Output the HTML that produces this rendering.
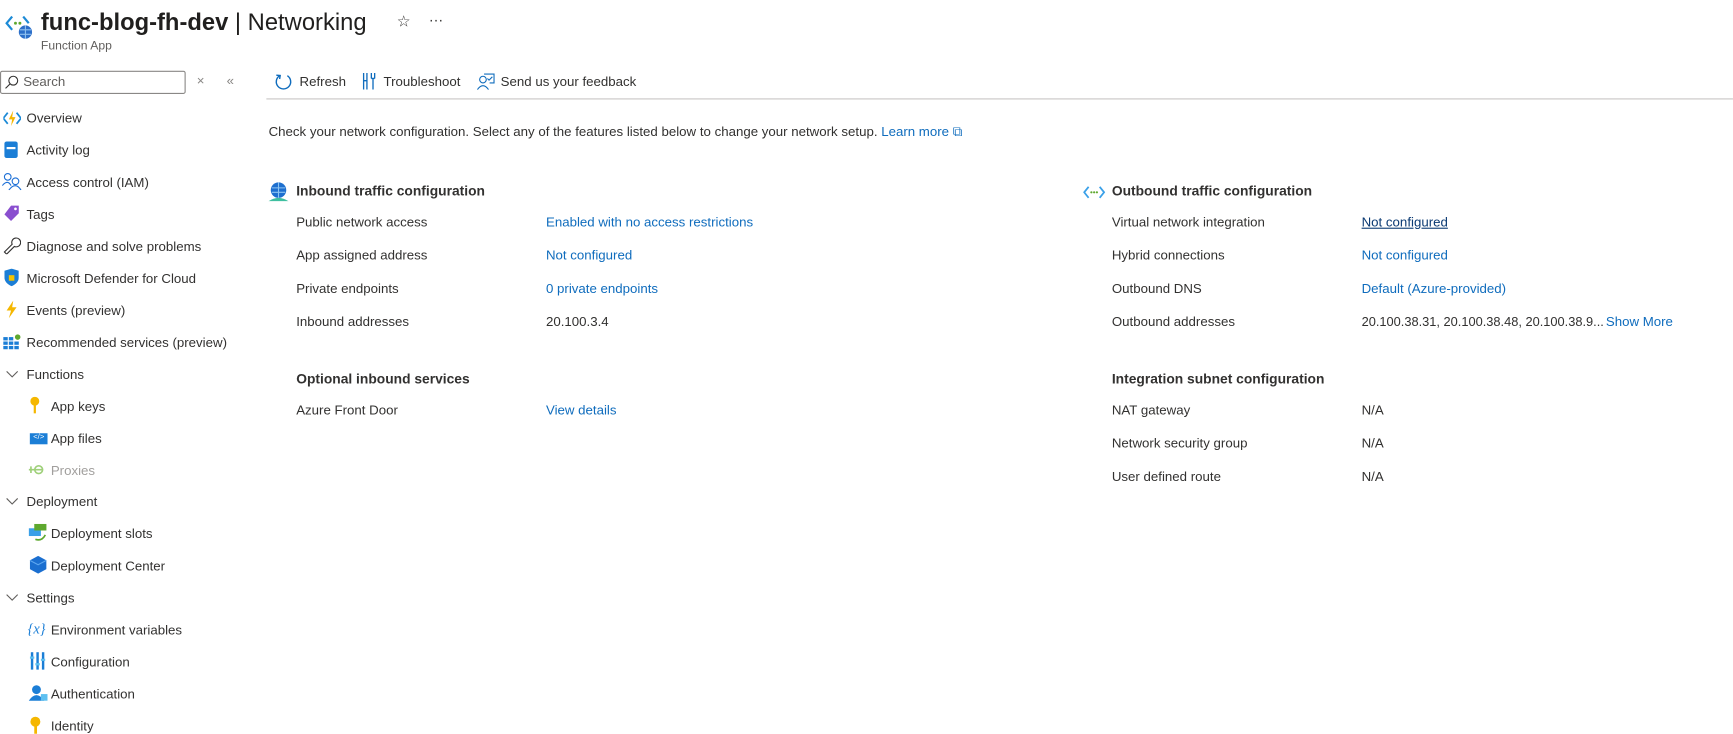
<!DOCTYPE html>
<html><head><meta charset="utf-8"><style>
*{margin:0;padding:0;box-sizing:border-box}
body{width:1733px;height:733px;background:#fff;font-family:"Liberation Sans",sans-serif;color:#323130;font-size:12px;position:relative;overflow:hidden}
#w{position:absolute;left:0;top:0;width:1568px;height:663px;transform:scale(1.1052);transform-origin:0 0}
.a{position:absolute;white-space:nowrap}
.l{color:#0f6cbd}
.b{font-weight:bold;font-size:12.5px}
.ic{position:absolute}
</style></head><body><div id="w">
<svg class="ic" style="left:4px;top:10px" width="26" height="26" viewBox="0 0 26 26"><path d="M7 5 L2 11 L7 17" stroke="#1c8ad6" stroke-width="2" fill="none"/><path d="M17 5 L22 11" stroke="#1c8ad6" stroke-width="2" fill="none"/><circle cx="10" cy="11" r="1.3" fill="#5ea82e"/><circle cx="14" cy="11" r="1.3" fill="#5ea82e"/><circle cx="19" cy="19" r="6" fill="#2c6fc9"/><path d="M14 17h10M14 21h10M19 13v12" stroke="#8fc1f0" stroke-width="1"/></svg>
<div class="a" style="left:37px;top:8px;font-size:21.5px;color:#201f1e"><b>func-blog-fh-dev</b> | Networking</div>
<div class="a" style="left:37px;top:36px;font-size:11px;color:#605e5c">Function App</div>
<div class="a" style="left:359px;top:11px;font-size:14px">☆</div>
<div class="a" style="left:388px;top:10px;font-size:13px">···</div>

<div class="a" style="left:0;top:64px;width:168px;height:21px;border:1px solid #8a8886;border-radius:2px"></div>
<svg class="ic" style="left:4px;top:68px" width="13" height="13"><circle cx="8" cy="5" r="4" stroke="#323130" fill="none"/><path d="M5 8 L1 12" stroke="#323130"/></svg>
<div class="a" style="left:21px;top:67px;color:#605e5c">Search</div>
<div class="a" style="left:178px;top:66px;color:#8a8886">×</div>
<div class="a" style="left:205px;top:66px;color:#8a8886">«</div>

<svg class="ic" style="left:248px;top:65px" width="17" height="17"><path d="M12 3.5 A6.5 6.5 0 1 1 5 3.5" stroke="#0f6cbd" stroke-width="1.3" fill="none"/><path d="M2 3 L5.5 3.3 L5 6.5" stroke="#0f6cbd" stroke-width="1.3" fill="none"/></svg>
<div class="a" style="left:271px;top:67px">Refresh</div>
<svg class="ic" style="left:326px;top:65px" width="14" height="17"><path d="M3 1v15M6 1v15M3 8h3M10 1v5M13 1v5M10 6h3M11.5 6v10" stroke="#0f6cbd" stroke-width="1.2" fill="none"/></svg>
<div class="a" style="left:347px;top:67px">Troubleshoot</div>
<svg class="ic" style="left:431px;top:65px" width="17" height="17"><circle cx="6" cy="7" r="3" stroke="#0f6cbd" fill="none"/><path d="M1 16 Q6 9 11 16M7 2h9v8h-4" stroke="#0f6cbd" fill="none"/><path d="M10 6l1.5 1.5 3-3" stroke="#0f6cbd" fill="none"/></svg>
<div class="a" style="left:453px;top:67px">Send us your feedback</div>
<div class="a" style="left:241px;top:89px;width:1327px;height:1px;background:#c8c6c4"></div>

<div class="a" style="left:243px;top:112px">Check your network configuration. Select any of the features listed below to change your network setup. <span class="l">Learn more ⧉</span></div>

<svg class="ic" style="left:242px;top:164px" width="20" height="20"><circle cx="10" cy="8" r="7" fill="#1e6fcf"/><path d="M4 6h12M4 10h12M10 1v14" stroke="#8cc4f3"/><path d="M1 18 Q10 12 19 18z" fill="#3fbfa0"/></svg>
<div class="a b" style="left:268px;top:166px">Inbound traffic configuration</div>
<div class="a" style="left:268px;top:194px">Public network access</div><div class="a l" style="left:494px;top:194px">Enabled with no access restrictions</div>
<div class="a" style="left:268px;top:224px">App assigned address</div><div class="a l" style="left:494px;top:224px">Not configured</div>
<div class="a" style="left:268px;top:254px">Private endpoints</div><div class="a l" style="left:494px;top:254px">0 private endpoints</div>
<div class="a" style="left:268px;top:284px">Inbound addresses</div><div class="a" style="left:494px;top:284px">20.100.3.4</div>
<div class="a b" style="left:268px;top:336px">Optional inbound services</div>
<div class="a" style="left:268px;top:364px">Azure Front Door</div><div class="a l" style="left:494px;top:364px">View details</div>

<svg class="ic" style="left:980px;top:167px" width="20" height="14"><path d="M5 2 L1 7 L5 12M15 2 L19 7 L15 12" stroke="#3aa0e8" stroke-width="1.6" fill="none"/><circle cx="7.5" cy="7" r="1" fill="#5ea82e"/><circle cx="10" cy="7" r="1" fill="#5ea82e"/><circle cx="12.5" cy="7" r="1" fill="#5ea82e"/></svg>
<div class="a b" style="left:1006px;top:166px">Outbound traffic configuration</div>
<div class="a" style="left:1006px;top:194px">Virtual network integration</div><div class="a" style="left:1232px;top:194px;color:#0b3a73;text-decoration:underline">Not configured</div>
<div class="a" style="left:1006px;top:224px">Hybrid connections</div><div class="a l" style="left:1232px;top:224px">Not configured</div>
<div class="a" style="left:1006px;top:254px">Outbound DNS</div><div class="a l" style="left:1232px;top:254px">Default (Azure-provided)</div>
<div class="a" style="left:1006px;top:284px">Outbound addresses</div><div class="a" style="left:1232px;top:284.5px;font-size:11.6px">20.100.38.31, 20.100.38.48, 20.100.38.9...</div><div class="a l" style="left:1453px;top:284px">Show More</div>
<div class="a b" style="left:1006px;top:336px">Integration subnet configuration</div>
<div class="a" style="left:1006px;top:364px">NAT gateway</div><div class="a" style="left:1232px;top:364px">N/A</div>
<div class="a" style="left:1006px;top:394px">Network security group</div><div class="a" style="left:1232px;top:394px">N/A</div>
<div class="a" style="left:1006px;top:424px">User defined route</div><div class="a" style="left:1232px;top:424px">N/A</div>

<svg class="ic" style="left:3px;top:99px" width="16" height="16"><path d="M4 3L0 8l4 5M12 3l4 5-4 5" stroke="#1c8ad6" stroke-width="1.6" fill="none"/><path d="M9 1L5 9h3l-1 6 4-8H8z" fill="#f5b700"/></svg>
<div class="a" style="left:24px;top:100px">Overview</div>
<div class="a" style="left:4px;top:128px;width:12px;height:15px;background:#1b7ed6;border-radius:2px"></div><div class="a" style="left:6px;top:133px;width:8px;height:2px;background:#fff"></div>
<div class="a" style="left:24px;top:129px">Activity log</div>
<svg class="ic" style="left:2px;top:156px" width="18" height="16"><circle cx="5" cy="4" r="3" stroke="#1c6fd6" fill="none"/><circle cx="12" cy="8" r="3" stroke="#1c6fd6" fill="none"/><path d="M0 12q5-6 8 0M6 16q6-8 11 0" stroke="#1c6fd6" fill="none"/></svg>
<div class="a" style="left:24px;top:158px">Access control (IAM)</div>
<svg class="ic" style="left:3px;top:185px" width="15" height="16"><path d="M7 1h7v7l-7 7-6-6z" fill="#8a4fcf"/><circle cx="11" cy="4" r="1.2" fill="#fff"/></svg>
<div class="a" style="left:24px;top:187px">Tags</div>
<svg class="ic" style="left:2px;top:214px" width="17" height="16"><path d="M2 14l7-7a4 4 0 1 1 2 2l-7 7z" stroke="#323130" fill="none"/></svg>
<div class="a" style="left:24px;top:216px">Diagnose and solve problems</div>
<svg class="ic" style="left:4px;top:243px" width="13" height="16"><path d="M6.5 0L13 2v6q0 5-6.5 8Q0 13 0 8V2z" fill="#1b7ed6"/><rect x="4" y="6" width="5" height="5" fill="#f5c400"/></svg>
<div class="a" style="left:24px;top:245px">Microsoft Defender for Cloud</div>
<svg class="ic" style="left:4px;top:272px" width="12" height="16"><path d="M8 0L2 9h4l-2 7 7-10H7z" fill="#f5b700"/></svg>
<div class="a" style="left:24px;top:274px">Events (preview)</div>
<svg class="ic" style="left:2px;top:301px" width="17" height="16"><g fill="#1b7ed6"><rect x="1" y="4" width="4" height="3"/><rect x="6" y="4" width="4" height="3"/><rect x="1" y="8" width="4" height="3"/><rect x="6" y="8" width="4" height="3"/><rect x="11" y="8" width="4" height="3"/><rect x="1" y="12" width="4" height="3"/><rect x="6" y="12" width="4" height="3"/><rect x="11" y="12" width="4" height="3"/></g><circle cx="14" cy="4" r="2.5" fill="#5ea82e"/></svg>
<div class="a" style="left:24px;top:303px">Recommended services (preview)</div>
<svg class="ic" style="left:5px;top:335px" width="12" height="8"><path d="M1 1l5 5 5-5" stroke="#605e5c" fill="none"/></svg>
<div class="a" style="left:24px;top:332px">Functions</div>
<svg class="ic" style="left:27px;top:359px" width="9" height="16"><circle cx="4.5" cy="4" r="4" fill="#f5b700"/><rect x="3.5" y="7" width="2" height="8" fill="#f5b700"/></svg>
<div class="a" style="left:46px;top:361px">App keys</div>
<div class="a" style="left:27px;top:392px;width:16px;height:10px;background:#1b7ed6"></div><div class="a" style="left:30px;top:392px;font-size:7px;color:#fff">&lt;/&gt;</div>
<div class="a" style="left:46px;top:390px">App files</div>
<svg class="ic" style="left:26px;top:419px" width="16" height="12"><circle cx="9" cy="6" r="3.5" stroke="#9fd07a" stroke-width="1.5" fill="none"/><path d="M0 6h13M2 3v6" stroke="#9fd07a" stroke-width="1.5"/></svg>
<div class="a" style="left:46px;top:419px;color:#a19f9d">Proxies</div>
<svg class="ic" style="left:5px;top:450px" width="12" height="8"><path d="M1 1l5 5 5-5" stroke="#605e5c" fill="none"/></svg>
<div class="a" style="left:24px;top:447px">Deployment</div>
<svg class="ic" style="left:26px;top:474px" width="17" height="17"><rect x="0" y="4" width="11" height="7" fill="#3aa0e8"/><rect x="5" y="0" width="11" height="6" fill="#5ea82e"/><path d="M6 14q6 2 9-4" stroke="#5ea82e" stroke-width="1.5" fill="none"/></svg>
<div class="a" style="left:46px;top:476px">Deployment slots</div>
<svg class="ic" style="left:27px;top:503px" width="15" height="16"><path d="M7.5 0L15 4v8l-7.5 4L0 12V4z" fill="#1b6fd0"/><path d="M0 4l7.5 4 7.5-4" stroke="#5ea8f0" fill="none"/></svg>
<div class="a" style="left:46px;top:505px">Deployment Center</div>
<svg class="ic" style="left:5px;top:537px" width="12" height="8"><path d="M1 1l5 5 5-5" stroke="#605e5c" fill="none"/></svg>
<div class="a" style="left:24px;top:534px">Settings</div>
<div class="a" style="left:25px;top:561px;color:#1b7ed6;font-family:'Liberation Serif',serif;font-style:italic;font-size:13px">{x}</div>
<div class="a" style="left:46px;top:563px">Environment variables</div>
<svg class="ic" style="left:27px;top:590px" width="14" height="16"><path d="M2 0v16M7 0v16M12 0v16" stroke="#1b7ed6" stroke-width="2.2"/><path d="M0 5h4M5 11h4M10 7h4" stroke="#5ec0f0" stroke-width="2"/></svg>
<div class="a" style="left:46px;top:592px">Configuration</div>
<svg class="ic" style="left:26px;top:619px" width="17" height="16"><circle cx="7" cy="5" r="4" fill="#1b7ed6"/><path d="M0 15q7-10 14 0z" fill="#1b7ed6"/><rect x="11" y="9" width="6" height="6" fill="#5ec0f0"/></svg>
<div class="a" style="left:46px;top:621px">Authentication</div>
<svg class="ic" style="left:26px;top:648px" width="14" height="16"><circle cx="6" cy="5" r="4.5" fill="#f5b700"/><rect x="5" y="8" width="2.5" height="8" fill="#f5b700"/></svg>
<div class="a" style="left:46px;top:650px">Identity</div>
</div></body></html>
